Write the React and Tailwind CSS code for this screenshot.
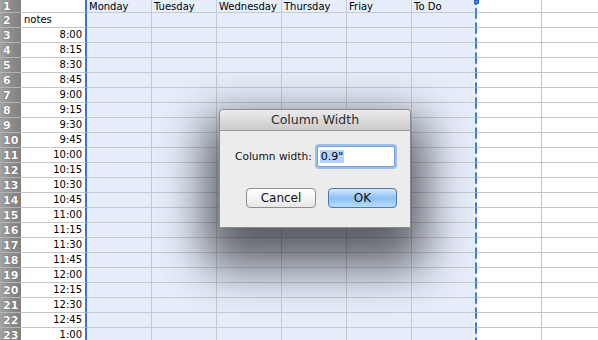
import React from 'react';

const times = [
  '8:00', '8:15', '8:30', '8:45', '9:00', '9:15', '9:30', '9:45',
  '10:00', '10:15', '10:30', '10:45', '11:00', '11:15', '11:30', '11:45',
  '12:00', '12:15', '12:30', '12:45', '1:00',
];

const days = ['Monday', 'Tuesday', 'Wednesday', 'Thursday', 'Friay', 'To Do'];

const rows = [
  { a: '', cells: days, first: true },
  { a: 'notes', left: true, cells: [] },
  ...times.map(t => ({ a: t, cells: [] })),
];

const Row = ({ n, row }) => {
  const h = row.first ? 'items-end' : 'items-center';
  return (
    <div className={`flex ${row.first ? 'h-[13px]' : 'h-[15px]'}`}>
      <div className={`w-[21px] shrink-0 flex ${h} pl-[3px] border-b border-[#b4b4b4] bg-gradient-to-r from-[#a3a3a3] via-[#8e8e8e] to-[#7f7f7f] text-white font-bold text-[11px] leading-none [text-shadow:0_0_1px_#3f3f3f]`}>
        {n}
      </div>
      <div className={`w-[66px] shrink-0 flex ${h} ${row.left ? 'justify-start pl-[3px]' : 'justify-end pr-[3px]'} bg-white border-b border-[#c6c6c6] border-r-2 border-r-[#3d73d8]`}>
        {row.a}
      </div>
      {[0, 1, 2, 3, 4].map(i => (
        <div key={i} className={`w-[65px] shrink-0 flex ${h} pl-[2px] bg-[#e6eefc] border-b border-r border-[#c6cad2]`}>
          {row.cells[i] || ''}
        </div>
      ))}
      <div className={`w-[65px] shrink-0 flex ${h} pl-[2px] bg-[#e6eefc] border-b border-[#c6cad2] border-r-2 border-r-[#3d7be0] [border-right-style:dashed]`}>
        {row.cells[5] || ''}
      </div>
      <div className="w-[65px] shrink-0 bg-white border-b border-r border-[#c6c6c6]" />
      <div className="w-[65px] shrink-0 bg-white border-b border-r border-[#c6c6c6]" />
    </div>
  );
};

export default function App() {
  return (
    <div className="relative w-[598px] h-[340px] overflow-hidden bg-white font-['DejaVu_Sans',sans-serif] text-[10px] leading-none text-black">
      <div className="flex flex-col">
        {rows.map((row, i) => (
          <Row key={i} n={i + 1} row={row} />
        ))}
      </div>

      {/* selection handle */}
      <div className="absolute left-[474px] top-0 w-[5px] h-[4px] bg-[#4a85e6] border border-[#2b5fb8]" />

      {/* Column Width sheet */}
      <div className="absolute left-[219px] top-[109px] w-[192px] h-[119px] flex flex-col bg-[#ececec] border border-[#8c8c8c] rounded-t-[4px] shadow-[0_24px_48px_14px_rgba(0,0,0,0.62)]">
        <div className="h-[21px] flex items-center justify-center rounded-t-[4px] bg-gradient-to-b from-[#ebebeb] to-[#cbcbcb] border-b border-[#9a9a9a] text-[12.5px] text-[#2e2e2e]">
          Column Width
        </div>
        <div className="flex items-center pl-[15px] mt-[15px] gap-[5px]">
          <span className="text-[10.6px] text-[#111]">Column width:</span>
          <div className="w-[78px] h-[21px] rounded-[2px] bg-white border border-[#7a9fd4] shadow-[0_0_0_2px_#9dbfee] flex items-center pl-[2px]">
            <span className="bg-[#b5d3fb] text-[11px] px-[1px] py-[1px]">0.9"</span>
          </div>
        </div>
        <div className="flex items-center gap-[12px] pl-[26px] mt-[21px]">
          <div className="w-[70px] h-[20px] rounded-[4px] border border-[#8f8f8f] bg-gradient-to-b from-white via-[#f4f4f4] to-[#e6e6e6] flex items-center justify-center text-[12px] text-[#111]">
            Cancel
          </div>
          <div className="w-[69px] h-[20px] rounded-[4px] border border-[#5178b0] bg-gradient-to-b from-[#d6e9fc] via-[#8cc1f4] to-[#b9dcfb] flex items-center justify-center text-[12px] text-[#111]">
            OK
          </div>
        </div>
      </div>
    </div>
  );
}
